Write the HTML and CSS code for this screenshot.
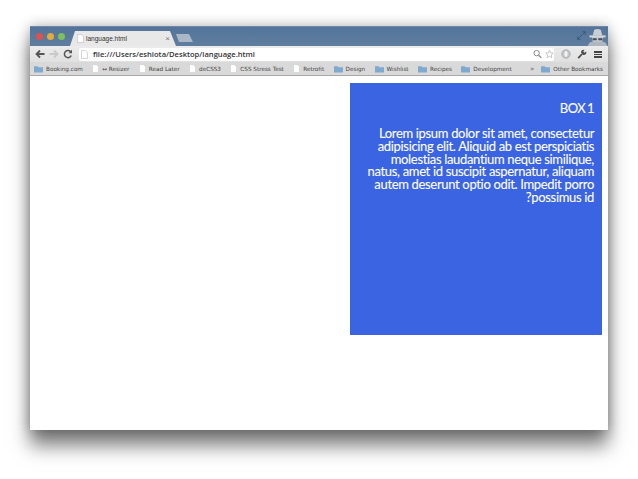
FILE: index.html
```html
<!DOCTYPE html>
<html lang="en">
<head>
    <meta charset="UTF-8">
    <title>language.html</title>
    <link rel="stylesheet" href="styles.css">
</head>
<body>
    <div class="browser">
        <div class="titlebar">
            <div class="lights">
                <span class="light red"></span>
                <span class="light yellow"></span>
                <span class="light green"></span>
            </div>
            <div class="tab">
                <svg class="page-icon" viewBox="0 0 8 10"><path d="M.5.5h4.500l2.500 2.500v6.500h-7z" fill="#fff" stroke="#b5b8bc" stroke-width=".7"/></svg>
                <span class="tab-title">language.html</span>
                <span class="tab-close">×</span>
            </div>
            <div class="new-tab"></div>
            <div class="title-right">
                <svg class="expand" viewBox="0 0 12 12"><path d="M1 11 11 1M7 1h4v4M1 7v4h4" fill="none" stroke="#37506c" stroke-width="1"/></svg>
                <svg class="spy" viewBox="0 0 26 22">
                    <path d="M7 9 9 2q4-2 8 0l2 7z" fill="#c9ced4"/>
                    <path d="M3 9h20v2.500H3z" fill="#d5d9dd"/>
                    <path d="M6 11h14l-1 6q-6 3-12 0z" fill="#c3c8ce"/>
                    <path d="M7 12.500h5v2.500H7zM14 12.500h5v2.500h-5z" fill="#444b54"/>
                    <path d="M1 22q2-6 7-5h10q5-1 7 5z" fill="#aeb6bf"/>
                </svg>
            </div>
        </div>
        <div class="toolbar">
            <svg class="nav-icon" viewBox="0 0 10 10"><path d="M9.500 5H2M5 1.500 1.500 5 5 8.500" fill="none" stroke="#555" stroke-width="1.800"/></svg>
            <svg class="nav-icon" viewBox="0 0 10 10"><path d="M.5 5H8M5 1.500 8.500 5 5 8.500" fill="none" stroke="#c9c9c9" stroke-width="1.800"/></svg>
            <svg class="nav-icon" viewBox="0 0 10 10"><path d="M8.300 6.500A3.600 3.600 0 1 1 8 3" fill="none" stroke="#555" stroke-width="1.500"/><path d="M9 .8v3.400H5.600z" fill="#555"/></svg>
            <div class="omnibox">
                <svg class="page-icon" viewBox="0 0 8 10"><path d="M.5.5h4.500l2.500 2.500v6.500h-7z" fill="#fff" stroke="#b5b8bc" stroke-width=".7"/></svg>
                <span class="url">file:///Users/eshiota/Desktop/language.html</span>
                <svg class="omni-icon" viewBox="0 0 10 10"><circle cx="4" cy="4" r="3" fill="none" stroke="#8a8a8a" stroke-width="1.100"/><path d="M6.300 6.300 9.300 9.300" stroke="#8a8a8a" stroke-width="1.500"/></svg>
                <svg class="omni-icon" viewBox="0 0 12 12"><path d="M6 1 7.500 4.400 11 4.800 8.400 7.200 9.100 10.800 6 9 2.900 10.800 3.600 7.200 1 4.800 4.500 4.400z" fill="#fff" stroke="#a5a5a5" stroke-width=".8"/></svg>
            </div>
            <svg class="tool-icon" viewBox="0 0 12 12"><circle cx="6" cy="6" r="5" fill="#c4c6c8" stroke="#a4a6a8"/><ellipse cx="6" cy="6" rx="2" ry="3.500" fill="#f2f2f2"/></svg>
            <svg class="tool-icon" viewBox="0 0 12 12"><path d="M1.500 11 6 6" stroke="#4b4b4b" stroke-width="2.200"/><path d="M5 4.500a3 3 0 0 1 4-3.500L7.500 3l1.500 1.500L11 3a3 3 0 0 1-4 4z" fill="#4b4b4b"/></svg>
            <div class="menu-icon"></div>
        </div>
        <div class="bookmarks">
            <div class="bookmark"><svg class="folder" viewBox="0 0 10 8"><path d="M0 1h4l1 1h5v6H0z" fill="#7fa9cf"/></svg>Booking.com</div>
            <div class="bookmark"><svg class="page-icon" viewBox="0 0 8 10"><path d="M.5.5h4.500l2.500 2.500v6.500h-7z" fill="#fff" stroke="#c5c8cc" stroke-width=".7"/></svg>↔ Resizer</div>
            <div class="bookmark"><svg class="page-icon" viewBox="0 0 8 10"><path d="M.5.5h4.500l2.500 2.500v6.500h-7z" fill="#fff" stroke="#c5c8cc" stroke-width=".7"/></svg>Read Later</div>
            <div class="bookmark"><svg class="page-icon" viewBox="0 0 8 10"><path d="M.5.5h4.500l2.500 2.500v6.500h-7z" fill="#fff" stroke="#c5c8cc" stroke-width=".7"/></svg>deCSS3</div>
            <div class="bookmark"><svg class="page-icon" viewBox="0 0 8 10"><path d="M.5.5h4.500l2.500 2.500v6.500h-7z" fill="#fff" stroke="#c5c8cc" stroke-width=".7"/></svg>CSS Stress Test</div>
            <div class="bookmark"><svg class="page-icon" viewBox="0 0 8 10"><path d="M.5.5h4.500l2.500 2.500v6.500h-7z" fill="#fff" stroke="#c5c8cc" stroke-width=".7"/></svg>Retrofit</div>
            <div class="bookmark"><svg class="folder" viewBox="0 0 10 8"><path d="M0 1h4l1 1h5v6H0z" fill="#7fa9cf"/></svg>Design</div>
            <div class="bookmark"><svg class="folder" viewBox="0 0 10 8"><path d="M0 1h4l1 1h5v6H0z" fill="#7fa9cf"/></svg>Wishlist</div>
            <div class="bookmark"><svg class="folder" viewBox="0 0 10 8"><path d="M0 1h4l1 1h5v6H0z" fill="#7fa9cf"/></svg>Recipes</div>
            <div class="bookmark"><svg class="folder" viewBox="0 0 10 8"><path d="M0 1h4l1 1h5v6H0z" fill="#7fa9cf"/></svg>Development</div>
            <div class="bookmarks-right">
                <span class="more">»</span>
                <div class="bookmark"><svg class="folder" viewBox="0 0 10 8"><path d="M0 1h4l1 1h5v6H0z" fill="#7fa9cf"/></svg>Other Bookmarks</div>
            </div>
        </div>
        <div class="content">
            <div class="box">
                <h1>BOX 1</h1>
                <p>Lorem ipsum dolor sit amet, consectetur adipisicing elit. Aliquid ab est perspiciatis molestias laudantium neque similique, natus, amet id suscipit aspernatur, aliquam autem deserunt optio odit. Impedit porro possimus id?</p>
            </div>
        </div>
    </div>
</body>
</html>
```

FILE: styles.css
```css
html, body {
    height: 100%;
}
body {
    margin: 0;
    background-color: #fff;
    font-family: "Liberation Sans", Arial, sans-serif;
    overflow: hidden;
    padding: 26px 30px 0;
    box-sizing: border-box;
}
.browser {
    width: 578px;
    height: 404px;
    display: flex;
    flex-direction: column;
    box-shadow: 0 16px 18px rgba(0, 0, 0, 0.5), 0 0 12px rgba(0, 0, 0, 0.3);
    background-color: #fff;
}
.titlebar {
    height: 20px;
    display: flex;
    align-items: flex-end;
    background: linear-gradient(#53739a, #5f7e9f);
    border-top: 1px solid #6f88a5;
    box-sizing: border-box;
    flex: none;
}
.lights {
    display: flex;
    gap: 4px;
    padding: 0 0 6.500px 5.500px;
    width: 40px;
    box-sizing: border-box;
}
.light {
    width: 7px;
    height: 7px;
    border-radius: 50%;
}
.red { background-color: #e0504c; }
.yellow { background-color: #e3ab3a; }
.green { background-color: #7fc05a; }
.tab {
    width: 106px;
    height: 15px;
    padding: 0 6px 0 7px;
    box-sizing: border-box;
    display: flex;
    align-items: center;
    gap: 2px;
    background-color: #e8e8e8;
    clip-path: polygon(0 100%, 5px 0, 100px 0, 100% 100%);
    font-size: 6.500px;
    color: #333;
}
.tab-title {
    flex: 1;
}
.tab-close {
    color: #777;
    font-size: 8px;
}
.new-tab {
    width: 17px;
    height: 8px;
    margin-bottom: 4px;
    background-color: #a9b7c6;
    clip-path: polygon(0 0, 13px 0, 100% 100%, 3px 100%);
}
.title-right {
    margin-left: auto;
    display: flex;
    align-items: flex-end;
    gap: 1px;
}
.expand {
    width: 9px;
    height: 9px;
    margin-bottom: 6px;
}
.spy {
    width: 21px;
    height: 18px;
}
.toolbar {
    height: 16px;
    display: flex;
    align-items: center;
    flex: none;
    padding: 0 6px 0 5px;
    gap: 4px;
    box-sizing: border-box;
    background: linear-gradient(#ececec, #e0e0e0);
}
.nav-icon {
    width: 10px;
    height: 10px;
    flex: none;
}
.omnibox {
    flex: 1;
    height: 13px;
    margin: 0 3px 0 2px;
    padding: 0 0 0 2px;
    display: flex;
    align-items: center;
    gap: 3px;
    background-color: #fff;
    border-radius: 2px;
    font-family: "Open Sans", sans-serif;
    font-weight: 600;
    font-size: 7.600px;
    color: #333;
}
.omnibox .page-icon {
    margin-right: 2px;
}
.url {
    flex: 1;
}
.omni-icon {
    width: 9px;
    height: 10px;
}
.tool-icon {
    width: 10px;
    height: 10px;
    flex: none;
    margin-right: 2px;
}
.menu-icon {
    width: 8px;
    height: 7px;
    margin-left: 1px;
    border-top: 2px solid #444;
    border-bottom: 2px solid #444;
    box-sizing: border-box;
    background: linear-gradient(#444, #444) center / 100% 1px no-repeat;
}
.page-icon {
    width: 7px;
    height: 9px;
    flex: none;
}
.bookmarks {
    height: 14px;
    display: flex;
    align-items: center;
    flex: none;
    padding: 0 5px 0 4px;
    gap: 9.400px;
    box-sizing: border-box;
    background-color: #d9d9d9;
    border-bottom: 1px solid #a8a8a8;
    font-size: 5.700px;
    color: #444;
    font-family: "DejaVu Sans", sans-serif;
    white-space: nowrap;
}
.bookmark {
    display: flex;
    align-items: center;
    gap: 3px;
}
.folder {
    width: 9px;
    height: 8px;
    flex: none;
}
.bookmarks-right {
    margin-left: auto;
    display: flex;
    align-items: center;
    gap: 7px;
}
.more {
    color: #666;
    font-size: 7px;
}
.content {
    flex: 1;
    display: flex;
    justify-content: flex-end;
    align-items: flex-start;
    padding: 7px 6px 0 0;
    background-color: #fff;
}
.box {
    direction: rtl;
    width: 252px;
    height: 252px;
    padding: 17px 8px 0 12px;
    box-sizing: border-box;
    background-color: #3a64e1;
    color: #fff;
    font-family: Lato, sans-serif;
    font-size: 13px;
    line-height: 12.800px;
    letter-spacing: -0.330px;
    -webkit-text-stroke: 0.100px #fff;
}
.box h1 {
    margin: 0 0 11px;
    font-size: 13px;
    font-weight: normal;
    line-height: 16px;
    letter-spacing: -0.500px;
    word-spacing: -1px;
}
.box p {
    margin: 0;
}
```
